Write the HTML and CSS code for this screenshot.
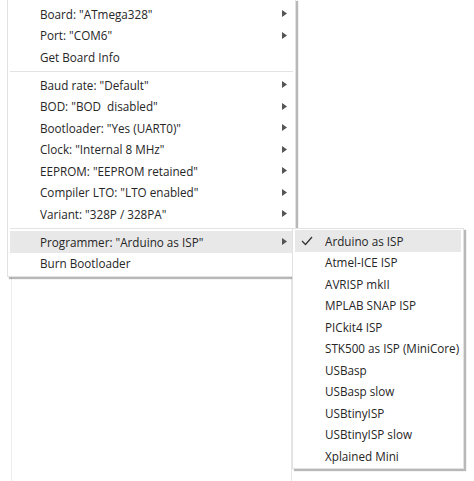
FILE: index.html
```html
<!DOCTYPE html>
<html>

<head>
  <title>Tools menu</title>
  <meta charset="utf-8" />
  <link rel="stylesheet" href="styles.css">
</head>

<body>
  <div id="page">
    <div class="panel"></div>

    <div class="menu main-menu">
      <div class="item">Board: "ATmega328"<svg class="arrow" width="5" height="7" viewBox="0 0 5 7"><polygon points="0,0 5,3.5 0,7" /></svg></div>
      <div class="item">Port: "COM6"<svg class="arrow" width="5" height="7" viewBox="0 0 5 7"><polygon points="0,0 5,3.5 0,7" /></svg></div>
      <div class="item">Get Board Info</div>
      <div class="sep"></div>
      <div class="item">Baud rate: "Default"<svg class="arrow" width="5" height="7" viewBox="0 0 5 7"><polygon points="0,0 5,3.5 0,7" /></svg></div>
      <div class="item">BOD: "BOD&nbsp; disabled"<svg class="arrow" width="5" height="7" viewBox="0 0 5 7"><polygon points="0,0 5,3.5 0,7" /></svg></div>
      <div class="item">Bootloader: "Yes (UART0)"<svg class="arrow" width="5" height="7" viewBox="0 0 5 7"><polygon points="0,0 5,3.5 0,7" /></svg></div>
      <div class="item">Clock: "Internal 8 MHz"<svg class="arrow" width="5" height="7" viewBox="0 0 5 7"><polygon points="0,0 5,3.5 0,7" /></svg></div>
      <div class="item">EEPROM: "EEPROM retained"<svg class="arrow" width="5" height="7" viewBox="0 0 5 7"><polygon points="0,0 5,3.5 0,7" /></svg></div>
      <div class="item">Compiler LTO: "LTO enabled"<svg class="arrow" width="5" height="7" viewBox="0 0 5 7"><polygon points="0,0 5,3.5 0,7" /></svg></div>
      <div class="item">Variant: "328P / 328PA"<svg class="arrow" width="5" height="7" viewBox="0 0 5 7"><polygon points="0,0 5,3.5 0,7" /></svg></div>
      <div class="sep"></div>
      <div class="item active">Programmer: "Arduino as ISP"<svg class="arrow" width="5" height="7" viewBox="0 0 5 7"><polygon points="0,0 5,3.5 0,7" /></svg></div>
      <div class="item">Burn Bootloader</div>
    </div>

    <div class="menu sub-menu">
      <div class="item active">
        <svg class="check" width="12" height="10" viewBox="0 0 12 10"><polyline points="1,5 4.5,8.5 11,1" /></svg>
        Arduino as ISP
      </div>
      <div class="item">Atmel-ICE ISP</div>
      <div class="item">AVRISP mkII</div>
      <div class="item">MPLAB SNAP ISP</div>
      <div class="item">PICkit4 ISP</div>
      <div class="item">STK500 as ISP (MiniCore)</div>
      <div class="item">USBasp</div>
      <div class="item">USBasp slow</div>
      <div class="item">USBtinyISP</div>
      <div class="item">USBtinyISP slow</div>
      <div class="item">Xplained Mini</div>
    </div>
  </div>
</body>

</html>
```

FILE: styles.css
```css
html,
body {
  margin: 0;
  padding: 0;
  background-color: #ffffff;
}

body {
  font-family: "Open Sans", "Noto Sans", sans-serif;
  font-size: 11.7px;
  color: #262626;
}

#page {
  position: relative;
  width: 474px;
  height: 481px;
  overflow: hidden;
}

.panel {
  margin-left: 11px;
  width: 281px;
  height: 481px;
  box-sizing: border-box;
  border-left: 1px solid #ededed;
  border-right: 1px solid #e6e6e6;
}

.menu {
  position: absolute;
  box-sizing: border-box;
  background: #ffffff;
  border: 1px solid #e2e2e2;
  box-shadow: 2px 2px 1px rgba(0, 0, 0, 0.28);
}

.main-menu {
  left: 7px;
  top: -1px;
  width: 289px;
  padding: 3px 2px 2px 2px;
}

.sub-menu {
  left: 292px;
  top: 228px;
  width: 172px;
  padding: 1px 2px 1px 2px;
}

.item {
  display: flex;
  align-items: center;
  height: 21.5px;
  padding-left: 30px;
  padding-right: 6px;
  white-space: nowrap;
  position: relative;
}

.item.active {
  background-color: #e8e8e8;
}

.arrow {
  margin-left: auto;
  fill: #555555;
}

.check {
  position: absolute;
  left: 6px;
  top: 6px;
  fill: none;
  stroke: #333333;
  stroke-width: 1.3;
}

.sep {
  height: 1px;
  margin: 3px 0 2.5px 0;
  background-color: #e3e3e3;
}
```
